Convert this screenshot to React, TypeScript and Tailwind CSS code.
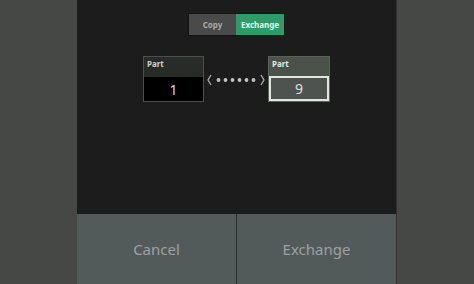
export default function App() {
  return (
    <div className="flex h-[284px] w-[474px] overflow-hidden bg-[#454845] font-['Noto_Sans',sans-serif]">
      <div className="w-[77px] shrink-0 bg-[#454845]" />
      <div className="flex w-[319px] shrink-0 flex-col bg-[#1c1c1c]">
        <div className="flex h-[214px] flex-col items-center">
          <div className="mt-[13px] flex h-[23px] border border-[#141414]">
            <div className="flex w-[47px] items-center justify-center bg-[#4a4a4a] text-[8px] font-bold text-[#a9a9a9]">
              Copy
            </div>
            <div className="flex w-[48px] items-center justify-center bg-[#2e9b68] text-[8px] font-bold text-[#e6f2ec]">
              Exchange
            </div>
          </div>

          <div className="mt-[20px] flex items-center">
            <div className="flex w-[61px] flex-col border border-[#4e4e4e]">
              <div className="h-[20px] bg-[#272c28] pl-[3px] pt-[3px] text-[8px] font-bold leading-none text-[#cfd4cf]">
                Part
              </div>
              <div className="flex h-[24px] items-center justify-center bg-black text-[14px] text-[#d8d8d8]">
                1
              </div>
            </div>

            <div className="flex w-[64px] items-center justify-center pt-[2px]">
              <svg width="58" height="12" viewBox="0 0 58 12">
                <path d="M4 1 L1 6 L4 11" stroke="#b8b8b8" strokeWidth="1.2" fill="none" />
                <path d="M54 1 L57 6 L54 11" stroke="#b8b8b8" strokeWidth="1.2" fill="none" />
                {[10, 17, 24, 31, 38, 45].map((x) => (
                  <circle key={x} cx={x + 1.5} cy="6" r="1.9" fill="#c4c4c4" />
                ))}
              </svg>
            </div>

            <div className="flex w-[62px] flex-col border border-[#5a625a]">
              <div className="h-[19px] bg-[#4a524a] pl-[3px] pt-[3px] text-[8px] font-bold leading-none text-[#e4e8e4]">
                Part
              </div>
              <div className="flex h-[25px] items-center justify-center border-2 border-[#e2e4e2] bg-[#4e534f] text-[14px] text-[#e0e0e0]">
                9
              </div>
            </div>
          </div>
        </div>

        <div className="flex h-[70px]">
          <div className="flex flex-1 items-center justify-center bg-[#535a5a] text-[15px] text-[#9ca2a2]">
            Cancel
          </div>
          <div className="w-[1px] bg-[#2a2e2e]" />
          <div className="flex flex-1 items-center justify-center bg-[#535a5a] text-[15px] text-[#9ca2a2]">
            Exchange
          </div>
        </div>
      </div>
      <div className="w-[1px] shrink-0 bg-[#2e302e]" />
      <div className="flex-1 bg-[#454845]" />
    </div>
  )
}
